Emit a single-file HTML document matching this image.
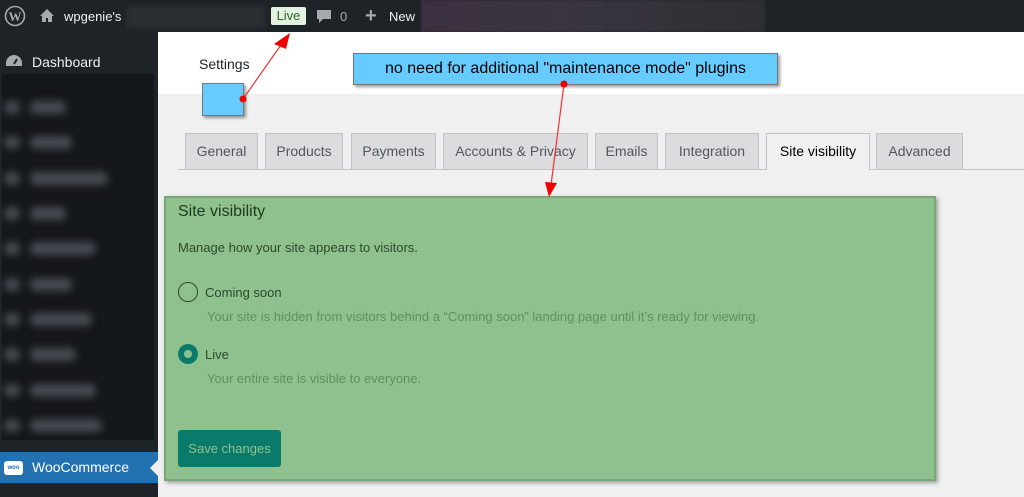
<!DOCTYPE html>
<html><head><style>
*{box-sizing:border-box;margin:0;padding:0}
body{width:1024px;height:497px;overflow:hidden;font-family:"Liberation Sans","DejaVu Sans",sans-serif;background:#f0f0f1;position:relative}
.abs{position:absolute}
#top{left:0;top:0;width:1024px;height:32px;background:#1d2327;color:#f0f0f1;font-size:13px}
#side{left:0;top:32px;width:158px;height:465px;background:#1d2327}
.blur{position:absolute;height:13px;border-radius:6px;background:#474c52;filter:blur(4px)}
.tab{position:absolute;top:133px;height:36px;background:#dcdcde;border:1px solid #c3c4c7;border-bottom:none;font-size:14px;color:#50575e;text-align:center;line-height:34px}
.green{left:164px;top:196px;width:772px;height:285px;background:#8fc18f;border:2px solid #7aa67a;box-shadow:2px 2px 4px rgba(0,0,0,.35)}
.green div{position:absolute}
</style></head><body>
<div id="top" class="abs">
 <svg class="abs" style="left:4px;top:5px" width="22" height="22" viewBox="0 0 22 22"><circle cx="11" cy="11" r="9.5" fill="none" stroke="#a7aaad" stroke-width="1.6"/><text x="11" y="16" font-size="13" font-weight="bold" text-anchor="middle" fill="#a7aaad" font-family="Liberation Serif">W</text></svg>
 <svg class="abs" style="left:39px;top:8px" width="16" height="15" viewBox="0 0 16 15"><path d="M8 1L1 8h2v6h4v-4h2v4h4V8h2z" fill="#a7aaad"/></svg>
 <span class="abs" style="left:64px;top:9px">wpgenie's</span>
 <div class="abs" style="left:127px;top:6px;width:138px;height:22px;background:#2a2f34;filter:blur(2px)"></div>
 <div class="abs" style="left:271px;top:7px;width:35px;height:18px;background:#e3f2e1;border-radius:2px;color:#2a6a2a;font-size:13px;text-align:center;line-height:18px">Live</div>
 <svg class="abs" style="left:316px;top:9px" width="16" height="16" viewBox="0 0 16 16"><path d="M1 1h14v9H7l-4 4v-4H1z" fill="#a7aaad"/></svg>
 <span class="abs" style="left:340px;top:9px;color:#a7aaad">0</span>
 <span class="abs" style="left:365px;top:5px;font-size:20px;font-weight:bold;color:#a7aaad">+</span>
 <span class="abs" style="left:389px;top:9px">New</span>
 <div class="abs" style="left:421px;top:0;width:344px;height:32px;background:linear-gradient(90deg,#3d3040,#3a3540 40%,#2e2f33);filter:blur(1px)"></div>
</div>
<div id="side" class="abs">
 <svg class="abs" style="left:5px;top:21px" width="18" height="16" viewBox="0 0 18 16"><path d="M9 2a8 8 0 0 0-8 8v3h16v-3a8 8 0 0 0-8-8z" fill="#a7aaad"/><path d="M9 11l3-5" stroke="#1d2327" stroke-width="2"/></svg>
 <span class="abs" style="left:32px;top:22px;font-size:14px;color:#f0f0f1">Dashboard</span>
 <div class="abs" style="left:2px;top:42px;width:152px;height:366px;background:#14171b"></div>
 <div class="blur" style="left:4px;top:69px;width:16px"></div><div class="blur" style="left:30px;top:69px;width:36px"></div>
 <div class="blur" style="left:4px;top:104px;width:16px"></div><div class="blur" style="left:30px;top:104px;width:42px"></div>
 <div class="blur" style="left:4px;top:140px;width:16px"></div><div class="blur" style="left:30px;top:140px;width:78px"></div>
 <div class="blur" style="left:4px;top:175px;width:16px"></div><div class="blur" style="left:30px;top:175px;width:36px"></div>
 <div class="blur" style="left:4px;top:210px;width:16px"></div><div class="blur" style="left:30px;top:210px;width:66px"></div>
 <div class="blur" style="left:4px;top:246px;width:16px"></div><div class="blur" style="left:30px;top:246px;width:42px"></div>
 <div class="blur" style="left:4px;top:281px;width:16px"></div><div class="blur" style="left:30px;top:281px;width:62px"></div>
 <div class="blur" style="left:4px;top:316px;width:16px"></div><div class="blur" style="left:30px;top:316px;width:46px"></div>
 <div class="blur" style="left:4px;top:352px;width:16px"></div><div class="blur" style="left:30px;top:352px;width:66px"></div>
 <div class="blur" style="left:4px;top:387px;width:16px"></div><div class="blur" style="left:30px;top:387px;width:72px"></div>
 <div class="abs" style="left:0;top:420px;width:158px;height:31px;background:#2271b1"></div>
 <div class="abs" style="left:4px;top:429px;width:19px;height:14px;background:#fff;border-radius:3px;font-size:6px;color:#2271b1;text-align:center;line-height:14px;font-weight:bold">woo</div>
 <span class="abs" style="left:32px;top:427px;font-size:14px;color:#fff">WooCommerce</span>
 <div class="abs" style="left:150px;top:428px;width:0;height:0;border-top:8px solid transparent;border-bottom:8px solid transparent;border-right:8px solid #f0f0f1"></div>
</div>
<div class="abs" style="left:158px;top:32px;width:866px;height:62px;background:#fff"></div>
<span class="abs" style="left:199px;top:56px;font-size:14px;color:#1d2327">Settings</span>
<div class="tab" style="left:185px;width:73px">General</div>
<div class="tab" style="left:265px;width:78px">Products</div>
<div class="tab" style="left:351px;width:85px">Payments</div>
<div class="tab" style="left:443px;width:145px">Accounts &amp; Privacy</div>
<div class="tab" style="left:595px;width:63px">Emails</div>
<div class="tab" style="left:665px;width:94px">Integration</div>
<div class="tab" style="left:766px;width:104px;background:#f0f0f1;color:#000;height:37px;z-index:2">Site visibility</div>
<div class="tab" style="left:876px;width:87px">Advanced</div>
<div class="abs" style="left:178px;top:169px;width:846px;height:1px;background:#c3c4c7"></div>
<div class="abs green">
 <div style="left:12px;top:5px;font-size:16px;color:#1d3a1d;font-weight:500">Site visibility</div>
 <div style="left:12px;top:42px;font-size:13px;color:#2c4a2c">Manage how your site appears to visitors.</div>
 <div style="left:12px;top:84px;width:20px;height:20px;border:1.5px solid #2f4f2f;border-radius:50%"></div>
 <div style="left:39px;top:87px;font-size:13px;color:#2c4a2c">Coming soon</div>
 <div style="left:41px;top:111px;font-size:13px;color:#5f8f5f">Your site is hidden from visitors behind a “Coming soon” landing page until it’s ready for viewing.</div>
 <div style="left:12px;top:146px;width:20px;height:20px;background:#0a7a6a;border-radius:50%"><div style="left:6px;top:6px;width:8px;height:8px;background:#8fc18f;border-radius:50%"></div></div>
 <div style="left:39px;top:149px;font-size:13px;color:#2c4a2c">Live</div>
 <div style="left:41px;top:173px;font-size:13px;color:#5f8f5f">Your entire site is visible to everyone.</div>
 <div style="left:12px;top:232px;width:103px;height:37px;background:#0a7a6a;border-radius:3px;color:#8fc18f;font-size:13px;text-align:center;line-height:37px">Save changes</div>
</div>
<div class="abs" style="left:353px;top:53px;width:425px;height:32px;background:#66ccff;border:1px solid #777;box-shadow:2px 2px 3px rgba(0,0,0,.4);font-size:16px;color:#000;text-align:center;line-height:30px">no need for additional "maintenance mode" plugins</div>
<div class="abs" style="left:202px;top:83px;width:42px;height:33px;background:#66ccff;border:1px solid #777;box-shadow:2px 2px 3px rgba(0,0,0,.4)"></div>
<svg class="abs" style="left:0;top:0" width="1024" height="497">
 <line x1="243" y1="99" x2="283" y2="42" stroke="#e33" stroke-width="1.2"/>
 <polygon points="290,33 274,44 286,49" fill="#e00"/>
 <circle cx="243" cy="99" r="3.5" fill="#e00"/>
 <line x1="564" y1="84" x2="551" y2="185" stroke="#e33" stroke-width="1.2"/>
 <polygon points="549,197 545,182 557,183" fill="#e00"/>
 <circle cx="564" cy="84" r="3.5" fill="#e00"/>
</svg>
</body></html>
